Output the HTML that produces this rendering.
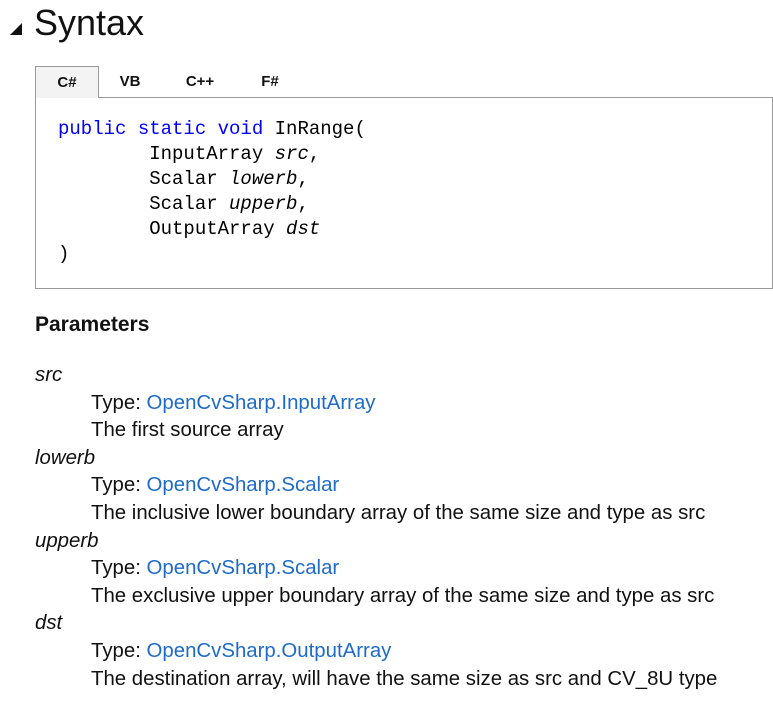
<!DOCTYPE html>
<html><head><meta charset="utf-8"><style>
body{margin:0;background:#fff;font-family:"Liberation Sans",sans-serif;color:#111;width:773px;height:723px;overflow:hidden;position:relative}
.a{position:absolute;white-space:nowrap}
.tri{left:10px;top:23px;width:0;height:0;border-left:12px solid transparent;border-bottom:12px solid #111}
h1{position:absolute;left:34px;top:2px;margin:0;font-size:36px;font-weight:normal}
.tabs{position:absolute;left:35px;top:66px;width:738px;height:31px;border-bottom:1px solid #999}
.tab{position:absolute;top:0;height:31px;line-height:31px;font-weight:bold;font-size:15px;text-align:center}
.sel{left:0;width:62px;border:1px solid #999;border-bottom:none;background:#f3f3f3;height:31px}
.code{position:absolute;left:35px;top:97px;width:736px;height:191px;border:1px solid #999;border-top:none}
pre{position:absolute;left:22px;top:20px;margin:0;font-family:"Liberation Mono",monospace;font-size:19px;line-height:25px;color:#000}
.k{color:#0000ff}
.p{font-size:20.4px;line-height:27.6px}
a{color:#1e6bc8;text-decoration:none}
</style></head><body>
<div class="a tri"></div>
<h1>Syntax</h1>
<div class="tabs">
<div class="tab sel">C#</div>
<div class="tab" style="left:75px;width:40px">VB</div>
<div class="tab" style="left:140px;width:50px">C++</div>
<div class="tab" style="left:215px;width:40px">F#</div>
</div>
<div class="code"><pre><span class="k">public static void</span> InRange(
        InputArray <i>src</i>,
        Scalar <i>lowerb</i>,
        Scalar <i>upperb</i>,
        OutputArray <i>dst</i>
)</pre></div>
<div class="a" style="left:35px;top:313px;font-size:21px;font-weight:bold">Parameters</div>
<div class="a p" style="left:35px;top:362px">
<i>src</i><br>
<span style="margin-left:56px">Type: <a>OpenCvSharp.InputArray</a></span><br>
<span style="margin-left:56px">The first source array</span><br>
<i>lowerb</i><br>
<span style="margin-left:56px">Type: <a>OpenCvSharp.Scalar</a></span><br>
<span style="margin-left:56px">The inclusive lower boundary array of the same size and type as src</span><br>
<i>upperb</i><br>
<span style="margin-left:56px">Type: <a>OpenCvSharp.Scalar</a></span><br>
<span style="margin-left:56px">The exclusive upper boundary array of the same size and type as src</span><br>
<i>dst</i><br>
<span style="margin-left:56px">Type: <a>OpenCvSharp.OutputArray</a></span><br>
<span style="margin-left:56px">The destination array, will have the same size as src and CV_8U type</span>
</div>
</body></html>
